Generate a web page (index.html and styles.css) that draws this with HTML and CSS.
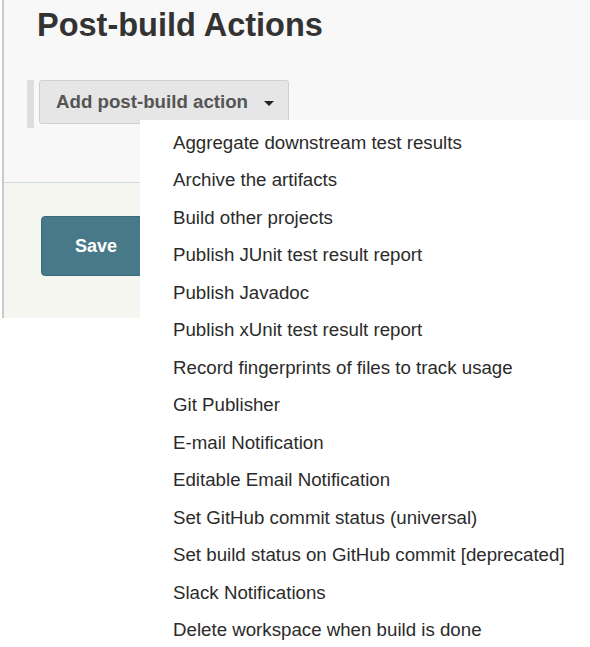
FILE: index.html
```html
<!DOCTYPE html>
<html>
<head>
<meta charset="utf-8">
<title>Post-build Actions</title>
<link rel="stylesheet" href="styles.css">
</head>
<body>
<div class="page">
  <section class="section">
    <h1 class="title">Post-build Actions</h1>
    <div class="add-row">
      <span class="strip"></span>
      <button class="add-btn" type="button">Add post-build action<span class="caret"></span></button>
    </div>
  </section>
  <div class="bottom-bar">
    <button class="save-btn" type="button">Save</button>
  </div>
</div>
<ul class="menu">
  <li>Aggregate downstream test results</li>
  <li>Archive the artifacts</li>
  <li>Build other projects</li>
  <li>Publish JUnit test result report</li>
  <li>Publish Javadoc</li>
  <li>Publish xUnit test result report</li>
  <li>Record fingerprints of files to track usage</li>
  <li>Git Publisher</li>
  <li>E-mail Notification</li>
  <li>Editable Email Notification</li>
  <li>Set GitHub commit status (universal)</li>
  <li>Set build status on GitHub commit [deprecated]</li>
  <li>Slack Notifications</li>
  <li>Delete workspace when build is done</li>
</ul>
</body>
</html>
```
FILE: styles.css
```css
html, body {
  margin: 0;
  padding: 0;
  background: #ffffff;
  font-family: "Liberation Sans", Arial, sans-serif;
  color: #333333;
}

.page {
  margin-left: 2px;
  border-left: 2px solid #c9c9c9;
  width: 588px;
}

.section {
  background: #f8f8f8;
  padding: 6px 0 54px 23px;
  border-bottom: 1px solid #cfdcd4;
}

.title {
  margin: 0 0 0 10px;
  font-size: 32.5px;
  line-height: 38px;
  font-weight: bold;
  color: #333333;
}

.add-row {
  margin-top: 36px;
  display: flex;
  align-items: flex-start;
  gap: 5px;
}

.strip {
  width: 7px;
  height: 48px;
  background: #dedede;
}

.add-btn {
  display: flex;
  align-items: center;
  height: 44px;
  width: 250px;
  box-sizing: border-box;
  padding: 0 0 0 16px;
  border: 1px solid #cfcfcf;
  border-radius: 3px;
  background: #e6e6e6;
  font-family: "Liberation Sans", Arial, sans-serif;
  font-size: 18.7px;
  font-weight: bold;
  color: #555555;
}

.caret {
  margin-left: 16px;
  width: 0;
  height: 0;
  border-left: 5px solid transparent;
  border-right: 5px solid transparent;
  border-top: 5px solid #222222;
  margin-top: 3px;
}

.bottom-bar {
  background: #f6f6f1;
  height: 135px;
  box-sizing: border-box;
  padding: 33px 0 0 37px;
}

.save-btn {
  height: 60px;
  padding: 0 33px;
  border: 1px solid #3c6b79;
  border-radius: 4px;
  background: #477988;
  color: #ffffff;
  font-family: "Liberation Sans", Arial, sans-serif;
  font-size: 18px;
  font-weight: bold;
}

.menu {
  position: absolute;
  left: 140px;
  top: 120px;
  right: 0;
  bottom: 0;
  margin: 0;
  padding: 3.5px 0 0 33px;
  list-style: none;
  background: #ffffff;
}

.menu li {
  font-size: 18.7px;
  line-height: 37.5px;
  color: #2b2b2b;
  white-space: nowrap;
}
```
